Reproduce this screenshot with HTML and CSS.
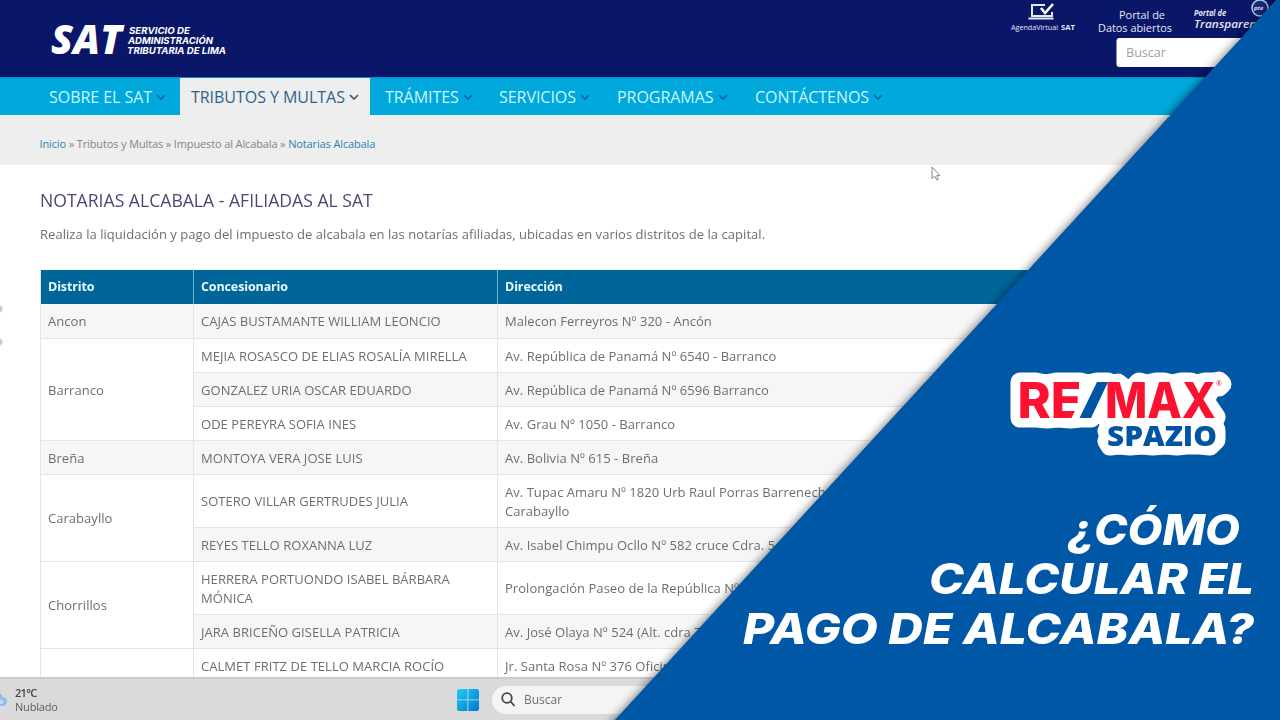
FILE: index.html
```html
<!DOCTYPE html>
<html lang="es">
<head>
<meta charset="utf-8">
<title>Notarias Alcabala - SAT</title>
<link rel="stylesheet" href="styles.css">
</head>
<body>
<div class="screen">
  <div class="desktop">
  <header class="top">
    <svg class="sat-logo" width="190" height="60" viewBox="0 -16 190 60">
      <text class="sat-word" x="0" y="32" textLength="71" lengthAdjust="spacingAndGlyphs">SAT</text>
      <g class="sat-lines">
        <text x="78" y="11.5" textLength="61" lengthAdjust="spacingAndGlyphs">SERVICIO DE</text>
        <text x="77" y="22" textLength="85" lengthAdjust="spacingAndGlyphs">ADMINISTRACIÓN</text>
        <text x="76" y="32" textLength="99" lengthAdjust="spacingAndGlyphs">TRIBUTARIA DE LIMA</text>
      </g>
    </svg>
    <svg class="links" width="280" height="76" viewBox="1000 0 280 76">
      <path d="M1045 5h-13v11h20v-4M1028.500 18.500h25" class="laptop"/>
      <path d="M1041 8l4 5 8-9" class="tick"/>
      <text x="1011" y="30" class="tiny" textLength="47" lengthAdjust="spacingAndGlyphs">AgendaVirtual</text>
      <text x="1061" y="30" class="tiny strong" textLength="14" lengthAdjust="spacingAndGlyphs">SAT</text>
      <text x="1119" y="19" class="link" textLength="46" lengthAdjust="spacingAndGlyphs">Portal de</text>
      <text x="1098" y="32" class="link" textLength="74" lengthAdjust="spacingAndGlyphs">Datos abiertos</text>
      <text x="1194" y="16" class="portal-s" textLength="32" lengthAdjust="spacingAndGlyphs">Portal de</text>
      <text x="1194" y="28" class="portal-l" textLength="78" lengthAdjust="spacingAndGlyphs">Transparencia</text>
      <circle cx="1260" cy="8" r="8" class="badge"/>
      <text x="1254" y="10" class="pte">pte</text>
      <rect x="1116.500" y="38" width="170" height="29" rx="3" fill="#fff"/>
      <text x="1126" y="57" class="find" textLength="40" lengthAdjust="spacingAndGlyphs">Buscar</text>
    </svg>
  </header>

  <nav class="menu">
    <a class="item i1"><span>SOBRE EL SAT</span><svg class="chev" viewBox="0 0 10 6"><path d="M1 1l4 4 4-4"/></svg></a>
    <a class="item i2 on"><span>TRIBUTOS Y MULTAS</span><svg class="chev" viewBox="0 0 10 6"><path d="M1 1l4 4 4-4"/></svg></a>
    <a class="item i3"><span>TRÁMITES</span><svg class="chev" viewBox="0 0 10 6"><path d="M1 1l4 4 4-4"/></svg></a>
    <a class="item i4"><span>SERVICIOS</span><svg class="chev" viewBox="0 0 10 6"><path d="M1 1l4 4 4-4"/></svg></a>
    <a class="item i5"><span>PROGRAMAS</span><svg class="chev" viewBox="0 0 10 6"><path d="M1 1l4 4 4-4"/></svg></a>
    <a class="item i6"><span>CONTÁCTENOS</span><svg class="chev" viewBox="0 0 10 6"><path d="M1 1l4 4 4-4"/></svg></a>
  </nav>

  <div class="crumbs"><p><a>Inicio</a> » Tributos y Multas » Impuesto al Alcabala » <a>Notarias Alcabala</a></p></div>

  <main class="page">
    <h1>NOTARIAS ALCABALA - AFILIADAS AL SAT</h1>
    <p class="intro">Realiza la liquidación y pago del impuesto de alcabala en las notarías afiliadas, ubicadas en varios distritos de la capital.</p>
    <div class="grid">
      <div class="th">Distrito</div><div class="th">Concesionario</div><div class="th">Dirección</div>
      <div class="alt">Ancon</div><div class="alt">CAJAS BUSTAMANTE WILLIAM LEONCIO</div><div class="alt">Malecon Ferreyros Nº 320 - Ancón</div>
      <div class="span3">Barranco</div><div>MEJIA ROSASCO DE ELIAS ROSALÍA MIRELLA</div><div>Av. República de Panamá Nº 6540 - Barranco</div>
      <div class="alt">GONZALEZ URIA OSCAR EDUARDO</div><div class="alt">Av. República de Panamá Nº 6596 Barranco</div>
      <div>ODE PEREYRA SOFIA INES</div><div>Av. Grau Nº 1050 - Barranco</div>
      <div class="alt">Breña</div><div class="alt">MONTOYA VERA JOSE LUIS</div><div class="alt">Av. Bolivia Nº 615 - Breña</div>
      <div class="span2">Carabayllo</div><div>SOTERO VILLAR GERTRUDES JULIA</div><div>Av. Tupac Amaru Nº 1820 Urb Raul Porras Barrenechea<br>Carabayllo</div>
      <div class="alt">REYES TELLO ROXANNA LUZ</div><div class="alt">Av. Isabel Chimpu Ocllo Nº 582 cruce Cdra. 5</div>
      <div class="span2">Chorrillos</div><div>HERRERA PORTUONDO ISABEL BÁRBARA<br>MÓNICA</div><div>Prolongación Paseo de la República Nº</div>
      <div class="alt">JARA BRICEÑO GISELLA PATRICIA</div><div class="alt">Av. José Olaya Nº 524 (Alt. cdra.7</div>
      <div></div><div>CALMET FRITZ DE TELLO MARCIA ROCÍO</div><div>Jr. Santa Rosa Nº 376 Oficina</div>
    </div>
  </main>

  <footer class="taskbar">
    <svg class="cloud" width="9" height="18" viewBox="0 0 9 18"><path d="M-8 15V7C-6 0 2 1 2.500 6c6 0 6 9 0 9z" fill="#8fbdf0"/><path d="M-8 13V9c3-3 7-3 8 0 4-1 5 4 1 4z" fill="#c4dcf7"/></svg>
    <div class="weather"><b>21°C</b><span>Nublado</span></div>
    <svg class="win" width="22" height="22" viewBox="0 0 22 22">
      <defs><linearGradient id="w" x1="0" y1="0" x2="1" y2="1"><stop offset="0" stop-color="#20cdf5"/><stop offset="1" stop-color="#0078cf"/></linearGradient></defs>
      <path fill="url(#w)" d="M1.500 0h9v10.500H0v-9zM11.300 0h9.200L22 1.500v9H11.300zM0 11.300h10.500V22h-9L0 20.500zM11.300 11.300H22v9.200L20.500 22h-9.200z"/>
    </svg>
    <div class="task-search">
      <svg width="14" height="15" viewBox="0 0 14 15"><circle cx="6" cy="6" r="4.800"/><path d="M9.500 9.500l4 4.500"/></svg>
      <span>Buscar</span>
    </div>
  </footer>

  <svg class="handles" width="4" height="50" viewBox="0 0 4 50"><circle cx="-1" cy="9" r="3.500"/><circle cx="-1" cy="42" r="3.500"/></svg>
  <svg class="cursor" width="10" height="16" viewBox="0 0 10 16"><path d="M1 1v11.500l2.700-2.300L5.800 14l1.600-.8-1.800-3.600H9z"/></svg>
  </div>

  <svg class="promo" width="1280" height="720" viewBox="0 0 1280 720">
    <polygon class="wedge" points="1277,-1 1300,-26 1300,740 596.500,740"/>
    <path class="outline" d="M1020 382H1036L1045 384L1056 382H1080L1087 384L1097 382H1108L1112 384L1118 383L1129 392L1139 382L1147 384L1156 382H1164L1172 384L1181 382H1190L1197 384L1205 382H1213L1219 381L1222 384L1219 387L1212 386L1205 401L1216 417L1213 425L1216 430V440L1210 446L1200 445H1186L1177 446L1165 445L1153 446L1142 445L1130 446L1119 445L1110 446L1107 441L1109 437L1107 431L1111 424L1098 408L1091 418H1080L1071 419L1058 418L1047 419L1036 418H1020Z"/>
    <g class="red">
      <text x="1017.500" y="418" class="re" textLength="64" lengthAdjust="spacingAndGlyphs">RE</text>
      <text x="1105" y="418" class="re" textLength="111" lengthAdjust="spacingAndGlyphs">MAX</text>
      <text x="1216" y="386" class="reg">®</text>
    </g>
    <path d="M1089 382h8l-17 36h-8.500z" fill="#fff"/>
    <path d="M1097 382h11l-17 36h-11.500z" fill="#0054a4"/>
    <text x="1107" y="446" class="spazio" fill="#0054a4" textLength="110" lengthAdjust="spacingAndGlyphs">SPAZIO</text>
    <g class="headline">
      <text x="1068" y="545" textLength="172" lengthAdjust="spacingAndGlyphs">¿CÓMO</text>
      <text x="929" y="594" textLength="325" lengthAdjust="spacingAndGlyphs">CALCULAR EL</text>
      <text x="743" y="644" textLength="511" lengthAdjust="spacingAndGlyphs">PAGO DE ALCABALA?</text>
    </g>
  </svg>
</div>
</body>
</html>
```
FILE: styles.css
```css
* { box-sizing: border-box; }
body { margin: 0; overflow: hidden; }
.screen {
  position: relative;
  width: 1280px;
  height: 720px;
  overflow: hidden;
  background: #fff;
  font-family: "Open Sans", sans-serif;
  color: #6e6e6e;
}
.desktop {
  position: relative;
  height: 720px;
  display: flex;
  flex-direction: column;
  filter: blur(.4px);
}
p, h1 { margin: 0; }

.top {
  flex: none;
  height: 77px;
  display: flex;
  justify-content: space-between;
  align-items: flex-start;
  padding-left: 51px;
  background: #0a1668;
}
.sat-logo { margin-top: 6px; fill: #fff; }
.sat-word { font: italic 800 41px "Open Sans", sans-serif; }
.sat-lines { font: italic 700 9.4px Inter, sans-serif; }
.links { fill: #e6e8f6; }
.laptop { fill: none; stroke: #e6e8f6; stroke-width: 2; }
.tick { fill: none; stroke: #fff; stroke-width: 2.6; }
.tiny { font-size: 7.5px; }
.strong { font-weight: 700; }
.link { font-size: 10.5px; }
.portal-s { font: italic 700 8px "Open Sans", sans-serif; }
.portal-l { font: italic 600 11px "Open Sans", sans-serif; }
.badge { fill: #152a78; stroke: #a9cfe8; stroke-width: 1.5; }
.pte { font: italic 700 6px "Open Sans", sans-serif; }
.find { font-size: 12.5px; fill: #a0a0a0; }

.menu {
  flex: none;
  height: 38px;
  display: flex;
  background: #00a8db;
  border-top: 1px solid #0789c4;
  color: #c9f7ff;
  font-size: 16px;
}
.item { display: flex; align-items: center; white-space: nowrap; }
.item span { letter-spacing: -.04px; }
.chev { width: 10px; height: 6px; margin-left: 4px; fill: none; stroke: #086a9f; stroke-width: 1.7; }
.i1 { width: 180px; padding-left: 49px; }
.i2 { width: 190px; padding-left: 11px; }
.i3 { width: 129px; padding-left: 15px; }
.i4 { width: 118px; }
.i5 { width: 138px; }
.on { background: #eee; color: #2f6489; }
.on .chev { stroke: #51516f; }

.crumbs {
  flex: none;
  height: 50px;
  padding: 21px 0 0 39.5px;
  background: #eee;
  font-size: 11px;
  letter-spacing: -.13px;
  line-height: 16px;
  color: #858585;
}
.crumbs a { color: #2a83b3; }

.page { flex: 1; min-height: 0; padding: 23px 0 0 40px; overflow: hidden; }
h1 { font-size: 17.6px; line-height: 24px; font-weight: 400; color: #4b4775; white-space: nowrap; }
.intro { margin-top: 12px; font-size: 13px; letter-spacing: .045px; line-height: 20px; white-space: nowrap; }
.grid {
  margin-top: 26px;
  width: 1100px;
  display: grid;
  grid-template-columns: 153px 304px 1fr;
  grid-template-rows: 34px 35px 34px 34px 34px 34px 53px 34px 53px 34px 34px;
  border-left: 1px solid #e4e4e4;
  font-size: 13px;
  letter-spacing: .04px;
  line-height: 18.5px;
}
.grid > div {
  display: flex;
  align-items: center;
  padding: 1px 0 0 7px;
  border-right: 1px solid #e4e4e4;
  border-bottom: 1px solid #e4e4e4;
  white-space: nowrap;
}
.grid > .th { padding-top: 0; background: #006699; color: #e9fbff; font-size: 12.5px; font-weight: 700; letter-spacing: -.12px; border-color: #6fb4d2; border-bottom: 0; }
.grid > .alt { background: #f6f6f6; }
.span3 { grid-row: span 3; }
.span2 { grid-row: span 2; }

.taskbar {
  flex: none;
  height: 43px;
  display: flex;
  align-items: center;
  background: #dadada;
  border-top: 2px solid #cbcbcb;
}
.weather { width: 442px; margin-left: 6px; display: flex; flex-direction: column; font-size: 11px; letter-spacing: -.2px; line-height: 14px; color: #5c5c5c; }
.weather b { font-weight: 600; color: #444; letter-spacing: -.7px; }
.task-search {
  display: flex;
  align-items: center;
  width: 300px;
  height: 28px;
  margin-left: 13px;
  padding-left: 9px;
  border-radius: 14px;
  background: #f4f4f4;
  font-size: 12px;
}
.task-search svg { margin-right: 9px; fill: none; stroke: #444; stroke-width: 1.8; }

.handles { position: absolute; left: 0; top: 300px; fill: #ccc; }
.cursor { position: absolute; left: 931px; top: 166px; fill: #fff; stroke: #888; stroke-width: 1; }
.promo { position: absolute; left: 0; top: 0; }
.wedge { fill: #0057a5; filter: drop-shadow(-2px 0 4px rgba(0, 0, 0, .45)); }
.re { font: 800 49.5px Inter, sans-serif; }
.spazio { font: 800 29px "Open Sans", sans-serif; }
.outline { fill: #fff; stroke: #fff; stroke-width: 19px; stroke-linejoin: round; }
.red { fill: #fb1230; }
.reg { font-size: 7px; }
.headline { fill: #fff; font: italic 800 43px Inter, sans-serif; }
```
